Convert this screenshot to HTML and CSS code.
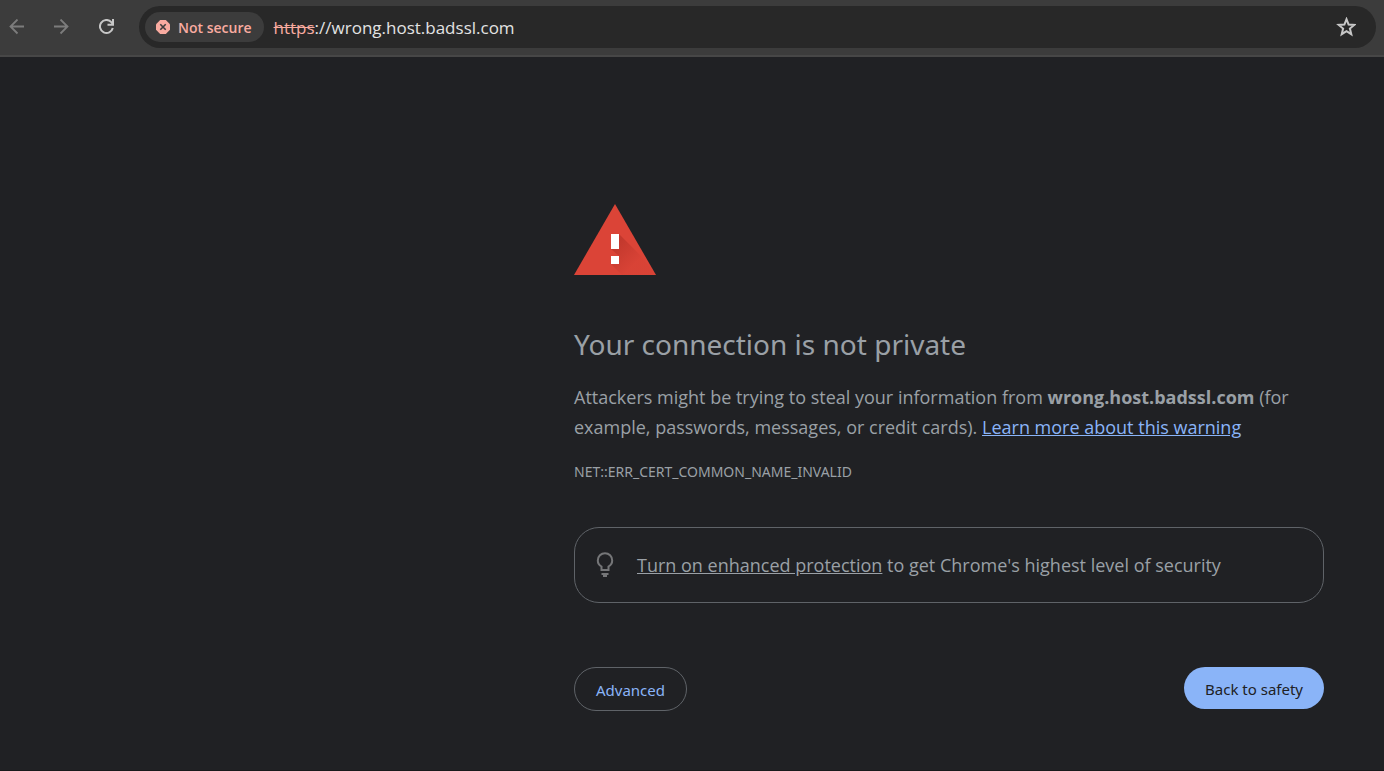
FILE: index.html
```html
<!DOCTYPE html>
<html lang="en">
<head>
    <meta charset="UTF-8">
    <meta name="viewport" content="width=device-width, initial-scale=1.0">
    <title>Privacy error</title>
    <link rel="stylesheet" href="styles.css">
</head>
<body>
    <header class="toolbar">
        <button class="nav-button" type="button" aria-label="Back" disabled>
            <svg width="16" height="16" viewBox="0 0 16 16" fill="none" stroke="currentColor" stroke-width="1.8"><path d="M15 7.500H1.500M8.500 0.500l-7 7 7 7"/></svg>
        </button>
        <button class="nav-button" type="button" aria-label="Forward" disabled>
            <svg width="16" height="16" viewBox="0 0 16 16" fill="none" stroke="currentColor" stroke-width="1.8"><path d="M0 7.500h13.500M6.500 0.500l7 7-7 7"/></svg>
        </button>
        <button class="nav-button reload" type="button" aria-label="Reload">
            <svg width="16" height="16" viewBox="0 0 16 16" fill="none" stroke="currentColor" stroke-width="2"><path d="M13.800 9A6.500 6.500 0 1 1 12.300 3.100L14 5M14 0V5.700H8.500"/></svg>
        </button>
        <div class="omnibox">
            <button class="chip" type="button">
                <svg width="14" height="14" viewBox="0 0 14 14"><path d="M4.200 0h5.600L14 4.200v5.600L9.800 14H4.200L0 9.800V4.200z" fill="#f9aba0" stroke="none"/><path d="M4.300 4.300l5.400 5.400M9.700 4.300L4.300 9.700" stroke="#3c3c3c" stroke-width="1.6"/></svg>
                Not secure
            </button>
            <div class="url"><s>https</s>://wrong.host.badssl.com</div>
            <button class="star" type="button" aria-label="Bookmark this tab">
                <svg width="20" height="20" viewBox="0 0 20 20" fill="none" stroke="currentColor" stroke-width="2"><path d="M10.500 2.200l2.100 5.300 5.700.4-4.400 3.600 1.400 5.700-4.800-3.100-4.800 3.100 1.400-5.700-4.400-3.600 5.700-.4z"/></svg>
            </button>
        </div>
    </header>

    <main class="interstitial">
        <svg class="warning-icon" width="82" height="71" viewBox="0 0 82 71" role="img" aria-label="Warning">
            <defs>
                <linearGradient id="shade" gradientUnits="userSpaceOnUse" x1="40" y1="42" x2="59" y2="61">
                    <stop offset="0" stop-color="#a52a21" stop-opacity="0.450"/>
                    <stop offset="1" stop-color="#a52a21" stop-opacity="0.050"/>
                </linearGradient>
            </defs>
            <path d="M41 0l41 71H0z" fill="#db4437"/>
            <path d="M45 30L67 52 82 71H48L37 60l8-1v-7l-8-7 8-1z" fill="url(#shade)"/>
            <path d="M37 30h8v15h-8zM37 52h8v8h-8z" fill="#fff"/>
        </svg>

        <h1>Your connection is not private</h1>
        <p class="message">Attackers might be trying to steal your information from <strong>wrong.host.badssl.com</strong> (for example, passwords, messages, or credit cards). <a class="learn-more" href="#">Learn more about this warning</a></p>
        <div class="error-code">NET::ERR_CERT_COMMON_NAME_INVALID</div>

        <div class="promo">
            <svg width="20" height="26" viewBox="0 0 20 26" fill="none" stroke="#757678" stroke-width="2"><path d="M6.500 18v-3.500C4 13 2.800 11 2.800 8.400a7.200 7.200 0 0 1 14.400 0c0 2.600-1.200 4.600-3.700 6.100V18zM6.500 18h7M6.500 22h7M8 24h4"/></svg>
            <p><a href="#">Turn on enhanced protection</a> to get Chrome's highest level of security</p>
        </div>

        <div class="actions">
            <button class="advanced" type="button">Advanced</button>
            <button class="primary" type="button">Back to safety</button>
        </div>
    </main>
</body>
</html>
```

FILE: styles.css
```css
* {
    box-sizing: border-box;
}
body {
    margin: 0;
    min-height: 100vh;
    background-color: #202124;
    border-bottom: 1px solid #18191b;
    color: #9aa0a6;
    font-family: "Segoe UI", "Open Sans", sans-serif;
}
button {
    border: none;
    padding: 0;
    background: none;
    color: inherit;
    font-family: inherit;
    cursor: pointer;
}
svg {
    display: block;
    flex-shrink: 0;
}
.toolbar {
    display: flex;
    align-items: center;
    gap: 29px;
    padding: 6px 8px 7px 9px;
    background-color: #3c3c3c;
    border-bottom: 2px solid #474747;
}
.nav-button {
    color: #7c7c7c;
}
.reload {
    color: #c7c7c7;
}
.omnibox {
    flex: 1;
    display: flex;
    align-items: center;
    gap: 10px;
    height: 42px;
    margin-left: -5px;
    padding: 0 20px 0 6px;
    border-radius: 21px;
    background-color: #282828;
}
.chip {
    display: flex;
    align-items: center;
    gap: 8px;
    height: 30px;
    padding: 0 12px 0 11px;
    border-radius: 15px;
    background-color: #3c3c3c;
    color: #f9aba0;
    font-size: 14px;
    font-weight: 600;
}
.url {
    flex: 1;
    color: #e3e3e3;
    font-size: 17px;
}
.url s {
    color: #f9aba0;
}
.star {
    color: #c7c7c7;
}
.interstitial {
    max-width: 750px;
    margin: 147px 60px 0 auto;
}
h1, .error-code, .actions button {
    font-family: "Segoe UI", "Noto Sans", sans-serif;
}
h1 {
    margin: 47px 0 16px;
    font-size: 28px;
    font-weight: 400;
    line-height: 44px;
}
p {
    margin: 0;
    font-size: 18px;
    line-height: 30px;
}
.learn-more {
    color: #8ab4f8;
}
.error-code {
    margin-top: 20px;
    font-size: 14px;
    line-height: 20px;
}
.promo {
    display: flex;
    align-items: center;
    gap: 22px;
    min-height: 76px;
    margin-top: 45px;
    padding: 0 20px;
    border: 1px solid #5f6368;
    border-radius: 25px;
}
.promo a {
    color: inherit;
}
.actions {
    display: flex;
    justify-content: space-between;
    align-items: flex-start;
    margin-top: 64px;
}
.actions button {
    height: 42px;
    padding: 2px 21px 0;
    border-radius: 22px;
    font-size: 15px;
}
.actions .advanced {
    height: 44px;
    border: 1px solid #5f6368;
    color: #8ab4f8;
}
.actions .primary {
    background-color: #8ab4f8;
    color: #202124;
}
```
